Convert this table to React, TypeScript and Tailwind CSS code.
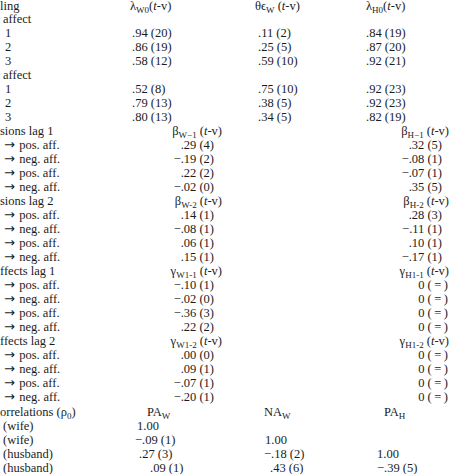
import React from "react";

const Sub: React.FC<{ children: React.ReactNode }> = ({ children }) => (
  <span className="relative top-[3px] text-[9px]">{children}</span>
);

const TV = () => (
  <span>
    (<i>t</i>-v)
  </span>
);

const Row: React.FC<{ children: React.ReactNode; first?: boolean }> = ({ children, first }) => (
  <div
    className={
      first
        ? "flex h-[12px] items-center whitespace-nowrap leading-[12px]"
        : "flex h-[14px] items-center whitespace-nowrap leading-[14px]"
    }
  >
    {children}
  </div>
);

const Arrow = () => (
  <span
    className="inline-block w-[12px] text-[13px] leading-[14px]"
    style={{ fontFamily: '"DejaVu Sans", sans-serif' }}
  >
    {"\u2192"}
  </span>
);

const loading = [
  [
    ["1", ".94 (20)", ".11 (2)", ".84 (19)"],
    ["2", ".86 (19)", ".25 (5)", ".87 (20)"],
    ["3", ".58 (12)", ".59 (10)", ".92 (21)"],
  ],
  [
    ["1", ".52 (8)", ".75 (10)", ".92 (23)"],
    ["2", ".79 (13)", ".38 (5)", ".92 (23)"],
    ["3", ".80 (13)", ".34 (5)", ".82 (19)"],
  ],
];

const arrows = ["pos. aff.", "neg. aff.", "pos. aff.", "neg. aff."];

const regressions = [
  { label: "sions lag 1", sym: "\u03b2", w: "W\u22121", h: "H\u22121", vals: [
    [".29 (4)", ".32 (5)"],
    ["\u2212.19 (2)", "\u2212.08 (1)"],
    [".22 (2)", "\u2212.07 (1)"],
    ["\u2212.02 (0)", ".35 (5)"],
  ] },
  { label: "sions lag 2", sym: "\u03b2", w: "W-2", h: "H-2", vals: [
    [".14 (1)", ".28 (3)"],
    ["\u2212.08 (1)", "\u2212.11 (1)"],
    [".06 (1)", ".10 (1)"],
    [".15 (1)", "\u2212.17 (1)"],
  ] },
];

const zero = "0 (\u2009=\u2009)";

const cross = [
  { label: "ffects lag 1", w: "W1-1", h: "H1-1", vals: [
    ["\u2212.10 (1)", zero],
    ["\u2212.02 (0)", zero],
    ["\u2212.36 (3)", zero],
    [".22 (2)", zero],
  ] },
  { label: "ffects lag 2", w: "W1-2", h: "H1-2", vals: [
    [".00 (0)", zero],
    [".09 (1)", zero],
    ["\u2212.07 (1)", zero],
    ["\u2212.20 (1)", zero],
  ] },
];

export default function App() {
  return (
    <div className="h-[474px] w-[474px] overflow-hidden bg-white text-[#1c1c1c]">
      <div
        className="text-[12.5px]"
        style={{ fontFamily: '"Liberation Serif", "Times New Roman", serif' }}
      >
        {/* Loadings */}
        <Row first>
          <span className="w-[130px] shrink-0">ling</span>
          <span className="w-[125px] shrink-0">
            λ<Sub>W0</Sub>
            <TV />
          </span>
          <span className="w-[111px] shrink-0">
            θϵ<Sub>W</Sub> <TV />
          </span>
          <span>
            λ<Sub>H0</Sub>
            <TV />
          </span>
        </Row>
        {loading.map((rows, si) => (
          <React.Fragment key={si}>
            <Row>
              <span className="pl-[3px]">affect</span>
            </Row>
            {rows.map((r) => (
              <Row key={r[0]}>
                <span className="w-[132px] shrink-0 pl-[5px]">{r[0]}</span>
                <span className="w-[126px] shrink-0">{r[1]}</span>
                <span className="w-[108px] shrink-0">{r[2]}</span>
                <span>{r[3]}</span>
              </Row>
            ))}
          </React.Fragment>
        ))}

        {/* Regressions */}
        {regressions.map((sec) => (
          <React.Fragment key={sec.label}>
            <Row>
              <span className="w-[150px] shrink-0">{sec.label}</span>
              <span className="w-[72px] shrink-0 text-right">
                {sec.sym}
                <Sub>{sec.w}</Sub> <TV />
              </span>
              <span className="w-[227px] shrink-0 text-right">
                {sec.sym}
                <Sub>{sec.h}</Sub> <TV />
              </span>
            </Row>
            {sec.vals.map((v, i) => (
              <Row key={i}>
                <span className="w-[150px] shrink-0 pl-[4px]">
                  <Arrow /> {arrows[i]}
                </span>
                <span className="w-[64px] shrink-0 text-right">{v[0]}</span>
                <span className="w-[228px] shrink-0 text-right">{v[1]}</span>
              </Row>
            ))}
          </React.Fragment>
        ))}

        {/* Cross effects */}
        {cross.map((sec) => (
          <React.Fragment key={sec.label}>
            <Row>
              <span className="w-[150px] shrink-0">{sec.label}</span>
              <span className="w-[72px] shrink-0 text-right">
                γ<Sub>{sec.w}</Sub> <TV />
              </span>
              <span className="w-[227px] shrink-0 text-right">
                γ<Sub>{sec.h}</Sub> <TV />
              </span>
            </Row>
            {sec.vals.map((v, i) => (
              <Row key={i}>
                <span className="w-[150px] shrink-0 pl-[4px]">
                  <Arrow /> {arrows[i]}
                </span>
                <span className="w-[64px] shrink-0 text-right">{v[0]}</span>
                <span className="w-[234px] shrink-0 text-right">{v[1]}</span>
              </Row>
            ))}
          </React.Fragment>
        ))}

        {/* Correlations */}
        <div className="mt-[1px]">
          <Row>
            <span className="w-[147px] shrink-0">
              orrelations (ρ<Sub>0</Sub>)
            </span>
            <span className="w-[117px] shrink-0">
              PA<Sub>W</Sub>
            </span>
            <span className="w-[120px] shrink-0">
              NA<Sub>W</Sub>
            </span>
            <span>
              PA<Sub>H</Sub>
            </span>
          </Row>
          <Row>
            <span className="w-[137px] shrink-0 pl-[3px]">(wife)</span>
            <span>1.00</span>
          </Row>
          <Row>
            <span className="w-[135px] shrink-0 pl-[3px]">(wife)</span>
            <span className="w-[130px] shrink-0">−.09 (1)</span>
            <span>1.00</span>
          </Row>
          <Row>
            <span className="w-[139px] shrink-0 pl-[3px]">(husband)</span>
            <span className="w-[125px] shrink-0">.27 (3)</span>
            <span className="w-[113px] shrink-0">−.18 (2)</span>
            <span>1.00</span>
          </Row>
          <Row>
            <span className="w-[150px] shrink-0 pl-[3px]">(husband)</span>
            <span className="w-[120px] shrink-0">.09 (1)</span>
            <span className="w-[107px] shrink-0">.43 (6)</span>
            <span>−.39 (5)</span>
          </Row>
        </div>
      </div>
    </div>
  );
}
